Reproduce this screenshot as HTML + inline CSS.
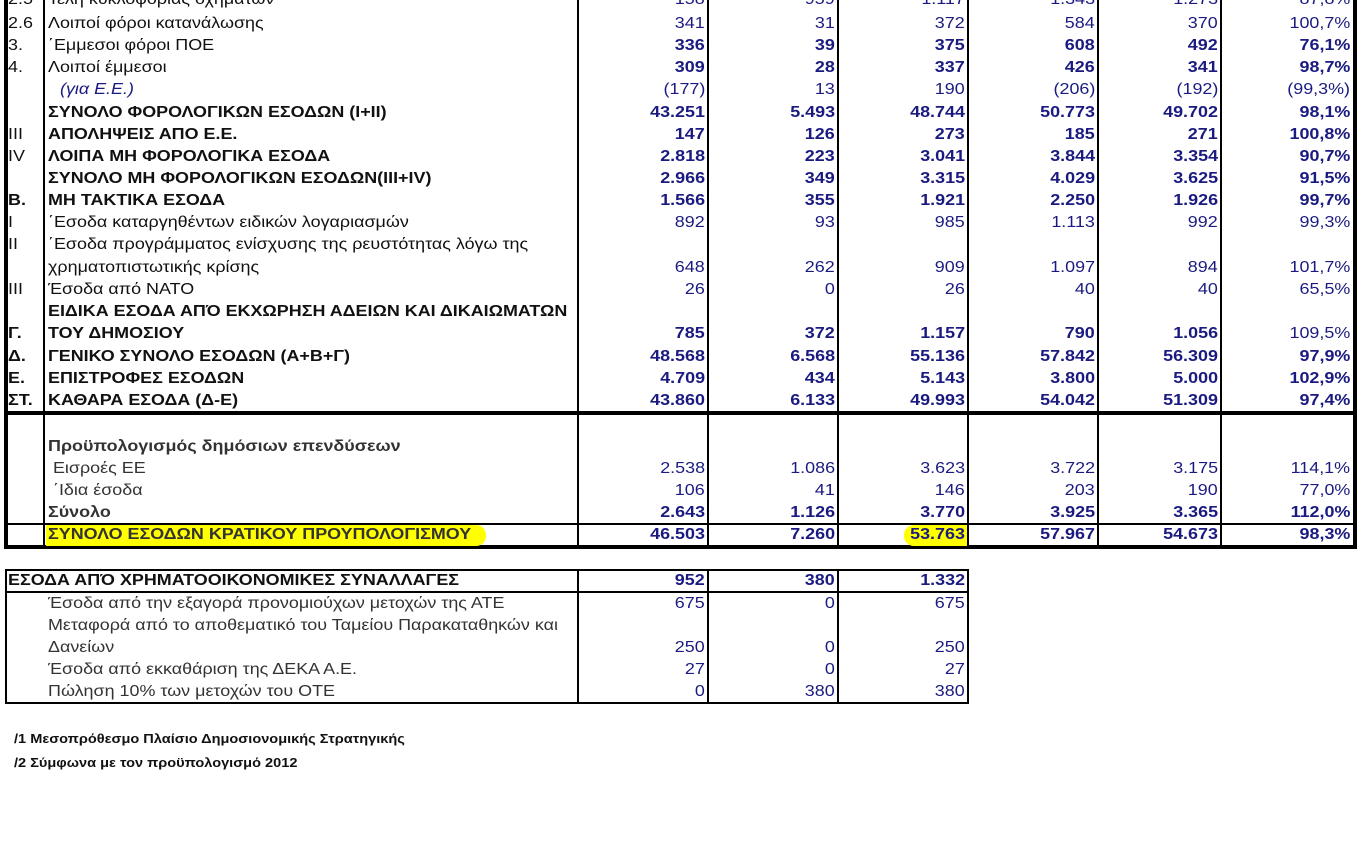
<!DOCTYPE html>
<html><head><meta charset="utf-8"><style>
body{margin:0;width:1362px;height:848px;background:#fff;position:relative;overflow:hidden;font-family:"Liberation Sans",Arial,sans-serif;font-size:16px;color:#111}
.r{position:absolute;left:0;width:1362px;height:22px;line-height:22px;white-space:nowrap}
.r span{position:absolute;transform:scaleX(1.12);transform-origin:left center}
.r span.n{transform-origin:right center}
.a{left:8px}.l{left:48px}.i{left:60px;font-style:italic;color:#1a1a80}
.n{text-align:right;color:#1a1a80}
.n2{right:657px}.n3{right:527px}.n4{right:397px}.n5{right:267px}.n6{right:144px}.n7{right:12px}
.b{font-weight:bold}
.v{position:absolute;background:#000;width:2px}
.h{position:absolute;background:#000;height:2px}
.fn{position:absolute;left:14px;font-size:13px;font-weight:bold;transform:scaleX(1.12);transform-origin:left center;white-space:nowrap}
</style></head><body>
<div class="v" style="left:4px;top:0;height:549px;width:4px"></div>
<div class="v" style="left:1353px;top:0;height:549px;width:4px"></div>
<div class="v" style="left:43px;top:0;height:548px"></div>
<div class="v" style="left:577px;top:0;height:548px"></div>
<div class="v" style="left:707px;top:0;height:548px"></div>
<div class="v" style="left:837px;top:0;height:548px"></div>
<div class="v" style="left:967px;top:0;height:548px"></div>
<div class="v" style="left:1097px;top:0;height:548px"></div>
<div class="v" style="left:1220px;top:0;height:548px"></div>
<div class="h" style="left:4px;top:411px;width:1353px;height:4px"></div>
<div class="h" style="left:4px;top:523px;width:1353px"></div>
<div class="h" style="left:4px;top:545px;width:1353px;height:4px"></div>
<div style="position:absolute;left:46px;top:525px;width:440px;height:21px;background:#ffff00;border-radius:0 10px 10px 0"></div>
<div style="position:absolute;left:904px;top:525px;width:63px;height:21px;background:#ffff00;border-radius:10px 0 0 10px"></div>

<div class="r" style="top:-11px"><span class="a">2.5</span><span class="l">Τέλη κυκλοφορίας οχημάτων</span><span class="n n2">158</span><span class="n n3">959</span><span class="n n4">1.117</span><span class="n n5">1.343</span><span class="n n6">1.273</span><span class="n n7">87,8%</span></div>
<div class="r" style="top:13px"><span class="a">2.6</span><span class="l">Λοιποί φόροι κατανάλωσης</span><span class="n n2">341</span><span class="n n3">31</span><span class="n n4">372</span><span class="n n5">584</span><span class="n n6">370</span><span class="n n7">100,7%</span></div>
<div class="r b" style="top:35px"><span class="a" style="font-weight:normal">3.</span><span class="l" style="font-weight:normal">΄Εμμεσοι φόροι ΠΟΕ</span><span class="n n2">336</span><span class="n n3">39</span><span class="n n4">375</span><span class="n n5">608</span><span class="n n6">492</span><span class="n n7">76,1%</span></div>
<div class="r b" style="top:57px"><span class="a" style="font-weight:normal">4.</span><span class="l" style="font-weight:normal">Λοιποί έμμεσοι</span><span class="n n2">309</span><span class="n n3">28</span><span class="n n4">337</span><span class="n n5">426</span><span class="n n6">341</span><span class="n n7">98,7%</span></div>
<div class="r" style="top:79px"><span class="i">(για Ε.Ε.)</span><span class="n n2">(177)</span><span class="n n3">13</span><span class="n n4">190</span><span class="n n5">(206)</span><span class="n n6">(192)</span><span class="n n7">(99,3%)</span></div>
<div class="r b" style="top:102px"><span class="l">ΣΥΝΟΛΟ ΦΟΡΟΛΟΓΙΚΩΝ ΕΣΟΔΩΝ (I+II)</span><span class="n n2">43.251</span><span class="n n3">5.493</span><span class="n n4">48.744</span><span class="n n5">50.773</span><span class="n n6">49.702</span><span class="n n7">98,1%</span></div>
<div class="r b" style="top:124px"><span class="a" style="font-weight:normal">III</span><span class="l">ΑΠΟΛΗΨΕΙΣ ΑΠΟ Ε.Ε.</span><span class="n n2">147</span><span class="n n3">126</span><span class="n n4">273</span><span class="n n5">185</span><span class="n n6">271</span><span class="n n7">100,8%</span></div>
<div class="r b" style="top:146px"><span class="a" style="font-weight:normal">IV</span><span class="l">ΛΟΙΠΑ ΜΗ ΦΟΡΟΛΟΓΙΚΑ ΕΣΟΔΑ</span><span class="n n2">2.818</span><span class="n n3">223</span><span class="n n4">3.041</span><span class="n n5">3.844</span><span class="n n6">3.354</span><span class="n n7">90,7%</span></div>
<div class="r b" style="top:168px"><span class="l">ΣΥΝΟΛΟ ΜΗ ΦΟΡΟΛΟΓΙΚΩΝ ΕΣΟΔΩΝ(III+IV)</span><span class="n n2">2.966</span><span class="n n3">349</span><span class="n n4">3.315</span><span class="n n5">4.029</span><span class="n n6">3.625</span><span class="n n7">91,5%</span></div>
<div class="r b" style="top:190px"><span class="a">Β.</span><span class="l">ΜΗ ΤΑΚΤΙΚΑ ΕΣΟΔΑ</span><span class="n n2">1.566</span><span class="n n3">355</span><span class="n n4">1.921</span><span class="n n5">2.250</span><span class="n n6">1.926</span><span class="n n7">99,7%</span></div>
<div class="r" style="top:212px"><span class="a">I</span><span class="l">΄Εσοδα καταργηθέντων ειδικών λογαριασμών</span><span class="n n2">892</span><span class="n n3">93</span><span class="n n4">985</span><span class="n n5">1.113</span><span class="n n6">992</span><span class="n n7">99,3%</span></div>
<div class="r" style="top:234px"><span class="a">II</span><span class="l">΄Εσοδα προγράμματος ενίσχυσης της ρευστότητας λόγω της</span></div>
<div class="r" style="top:257px"><span class="l">χρηματοπιστωτικής κρίσης</span><span class="n n2">648</span><span class="n n3">262</span><span class="n n4">909</span><span class="n n5">1.097</span><span class="n n6">894</span><span class="n n7">101,7%</span></div>
<div class="r" style="top:279px"><span class="a">III</span><span class="l">Έσοδα από ΝΑΤΟ</span><span class="n n2">26</span><span class="n n3">0</span><span class="n n4">26</span><span class="n n5">40</span><span class="n n6">40</span><span class="n n7">65,5%</span></div>
<div class="r b" style="top:301px"><span class="l">ΕΙΔΙΚΑ ΕΣΟΔΑ ΑΠΌ ΕΚΧΩΡΗΣΗ ΑΔΕΙΩΝ ΚΑΙ ΔΙΚΑΙΩΜΑΤΩΝ</span></div>
<div class="r b" style="top:323px"><span class="a">Γ.</span><span class="l">ΤΟΥ ΔΗΜΟΣΙΟΥ</span><span class="n n2">785</span><span class="n n3">372</span><span class="n n4">1.157</span><span class="n n5">790</span><span class="n n6">1.056</span><span class="n n7" style="font-weight:normal">109,5%</span></div>
<div class="r b" style="top:346px"><span class="a">Δ.</span><span class="l">ΓΕΝΙΚΟ ΣΥΝΟΛΟ ΕΣΟΔΩΝ (Α+Β+Γ)</span><span class="n n2">48.568</span><span class="n n3">6.568</span><span class="n n4">55.136</span><span class="n n5">57.842</span><span class="n n6">56.309</span><span class="n n7">97,9%</span></div>
<div class="r b" style="top:368px"><span class="a">Ε.</span><span class="l">ΕΠΙΣΤΡΟΦΕΣ ΕΣΟΔΩΝ</span><span class="n n2">4.709</span><span class="n n3">434</span><span class="n n4">5.143</span><span class="n n5">3.800</span><span class="n n6">5.000</span><span class="n n7">102,9%</span></div>
<div class="r b" style="top:390px"><span class="a">ΣΤ.</span><span class="l">ΚΑΘΑΡΑ ΕΣΟΔΑ (Δ-Ε)</span><span class="n n2">43.860</span><span class="n n3">6.133</span><span class="n n4">49.993</span><span class="n n5">54.042</span><span class="n n6">51.309</span><span class="n n7">97,4%</span></div>

<div class="r b" style="top:436px;color:#333"><span class="l">Προϋπολογισμός δημόσιων επενδύσεων</span></div>
<div class="r" style="top:458px;color:#333"><span class="l">&nbsp;Εισροές ΕΕ</span><span class="n n2">2.538</span><span class="n n3">1.086</span><span class="n n4">3.623</span><span class="n n5">3.722</span><span class="n n6">3.175</span><span class="n n7">114,1%</span></div>
<div class="r" style="top:480px;color:#333"><span class="l">&nbsp;΄Ιδια έσοδα</span><span class="n n2">106</span><span class="n n3">41</span><span class="n n4">146</span><span class="n n5">203</span><span class="n n6">190</span><span class="n n7">77,0%</span></div>
<div class="r b" style="top:502px;color:#333"><span class="l">Σύνολο</span><span class="n n2">2.643</span><span class="n n3">1.126</span><span class="n n4">3.770</span><span class="n n5">3.925</span><span class="n n6">3.365</span><span class="n n7">112,0%</span></div>
<div class="r b" style="top:524px;color:#333"><span class="l">ΣΥΝΟΛΟ ΕΣΟΔΩΝ ΚΡΑΤΙΚΟΥ ΠΡΟΥΠΟΛΟΓΙΣΜΟΥ</span><span class="n n2">46.503</span><span class="n n3">7.260</span><span class="n n4">53.763</span><span class="n n5">57.967</span><span class="n n6">54.673</span><span class="n n7">98,3%</span></div>

<div class="h" style="left:5px;top:569px;width:964px"></div>
<div class="h" style="left:5px;top:591px;width:964px"></div>
<div class="h" style="left:5px;top:702px;width:964px"></div>
<div class="v" style="left:5px;top:569px;height:135px"></div>
<div class="v" style="left:577px;top:569px;height:135px"></div>
<div class="v" style="left:707px;top:569px;height:135px"></div>
<div class="v" style="left:837px;top:569px;height:135px"></div>
<div class="v" style="left:967px;top:569px;height:135px"></div>
<div class="r b" style="top:570px"><span class="a">ΕΣΟΔΑ ΑΠΌ ΧΡΗΜΑΤΟΟΙΚΟΝΟΜΙΚΕΣ ΣΥΝΑΛΛΑΓΕΣ</span><span class="n n2">952</span><span class="n n3">380</span><span class="n n4">1.332</span></div>
<div class="r" style="top:593px;color:#333"><span class="l">Έσοδα από την εξαγορά προνομιούχων μετοχών της ΑΤΕ</span><span class="n n2">675</span><span class="n n3">0</span><span class="n n4">675</span></div>
<div class="r" style="top:615px;color:#333"><span class="l">Μεταφορά από το αποθεματικό του Ταμείου Παρακαταθηκών και</span></div>
<div class="r" style="top:637px;color:#333"><span class="l">Δανείων</span><span class="n n2">250</span><span class="n n3">0</span><span class="n n4">250</span></div>
<div class="r" style="top:659px;color:#333"><span class="l">Έσοδα από εκκαθάριση της ΔΕΚΑ Α.Ε.</span><span class="n n2">27</span><span class="n n3">0</span><span class="n n4">27</span></div>
<div class="r" style="top:681px;color:#333"><span class="l">Πώληση 10% των μετοχών του ΟΤΕ</span><span class="n n2">0</span><span class="n n3">380</span><span class="n n4">380</span></div>

<div class="fn" style="top:731px">/1 Μεσοπρόθεσμο Πλαίσιο Δημοσιονομικής Στρατηγικής</div>
<div class="fn" style="top:755px">/2 Σύμφωνα με τον προϋπολογισμό 2012</div>
</body></html>
